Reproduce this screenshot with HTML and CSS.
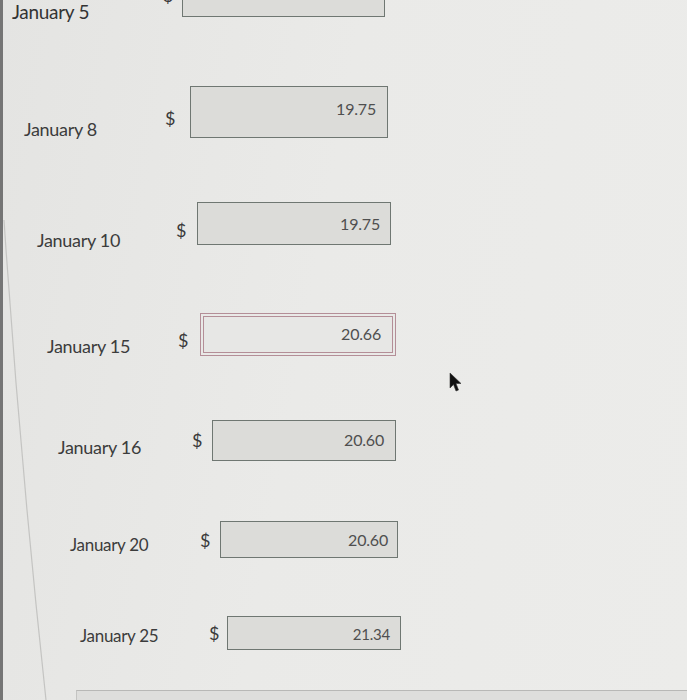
FILE: index.html
```html
<!DOCTYPE html>
<html lang="en">
<head>
<meta charset="utf-8">
<title>Dates</title>
<link rel="stylesheet" href="styles.css">
</head>
<body>
<div class="screen">
  <div class="bezel"></div>
  <main class="list">
    <div class="row row-0">
      <span class="label">January 5</span>
      <span class="dollar">$</span>
      <div class="field"><span class="value"></span></div>
    </div>
    <div class="row row-1">
      <span class="label">January 8</span>
      <span class="dollar">$</span>
      <div class="field"><span class="value">19.75</span></div>
    </div>
    <div class="row row-2">
      <span class="label">January 10</span>
      <span class="dollar">$</span>
      <div class="field"><span class="value">19.75</span></div>
    </div>
    <div class="row row-3">
      <span class="label">January 15</span>
      <span class="dollar">$</span>
      <div class="field field-error"><span class="value">20.66</span></div>
    </div>
    <div class="row row-4">
      <span class="label">January 16</span>
      <span class="dollar">$</span>
      <div class="field"><span class="value">20.60</span></div>
    </div>
    <div class="row row-5">
      <span class="label">January 20</span>
      <span class="dollar">$</span>
      <div class="field"><span class="value">20.60</span></div>
    </div>
    <div class="row row-6">
      <span class="label">January 25</span>
      <span class="dollar">$</span>
      <div class="field"><span class="value">21.34</span></div>
    </div>
    <div class="footer-box"></div>
  </main>
  <svg class="edge-line" width="60" height="700" viewBox="0 0 60 700"><path d="M4 220 Q20 460 46 700" fill="none" stroke="#c4c4c2" stroke-width="1.2"/></svg>
  <svg class="cursor" width="14" height="22" viewBox="0 0 14 22"><path d="M1 1 L1 16 L4.5 12.5 L7 19 L9.5 18 L7 11.5 L12 11.5 Z" fill="#111" stroke="#333" stroke-width="0.6"/></svg>
</div>
</body>
</html>
```

FILE: styles.css
```css
html, body {
  margin: 0;
  padding: 0;
  width: 687px;
  height: 700px;
  overflow: hidden;
  background: #e8e8e6;
}

.screen {
  position: relative;
  width: 687px;
  height: 700px;
  display: flex;
  background: linear-gradient(100deg, #e4e4e2 0%, #eaeae8 45%, #ececea 100%);
  font-family: Lato, "Open Sans", sans-serif;
  color: #3c3c3c;
}

.bezel {
  width: 3px;
  flex: none;
  background: #757575;
}

.list {
  flex: 1;
  display: flex;
  flex-direction: column;
  margin-top: -37px;
}

.row {
  display: flex;
  align-items: flex-start;
  flex: none;
}

.label {
  font-size: 18px;
  line-height: 20px;
  letter-spacing: -0.3px;
  white-space: nowrap;
  flex: none;
}

.dollar {
  font-size: 18px;
  line-height: 20px;
  flex: none;
  color: #3a3a3a;
}

.field {
  flex: none;
  box-sizing: border-box;
  border: 1px solid #6f7772;
  background: #dcdcd9;
  display: flex;
  justify-content: flex-end;
  align-items: flex-start;
}

.field-error {
  border-color: #b48e97;
  background: #e7e7e5;
  box-shadow: inset 0 0 0 2px #e9e9e7, inset 0 0 0 3px #b48e97;
}

.value {
  font-size: 16px;
  line-height: 18px;
  color: #4f4f4f;
  letter-spacing: -0.2px;
}

/* row geometry (photo perspective) */
.row-0 { height: 123px; padding-left: 9px; }
.row-0 .label { width: 151px; margin-top: 39px; font-size: 19px; color: #333; }
.row-0 .dollar { width: 19px; margin-top: 22px; }
.row-0 .field { width: 203px; height: 54px; }

.row-1 { height: 116px; padding-left: 21px; }
.row-1 .label { width: 141px; margin-top: 33px; }
.row-1 .dollar { width: 25px; margin-top: 22px; }
.row-1 .field { width: 198px; height: 52px; padding: 13px 11px 0 0; }

.row-2 { height: 111px; padding-left: 34px; }
.row-2 .label { width: 139px; margin-top: 28px; }
.row-2 .dollar { width: 21px; margin-top: 18px; }
.row-2 .field { width: 194px; height: 43px; padding: 12px 10px 0 0; }

.row-3 { height: 107px; padding-left: 44px; }
.row-3 .label { width: 131px; margin-top: 23px; }
.row-3 .dollar { width: 22px; margin-top: 17px; }
.row-3 .field { width: 196px; height: 43px; padding: 11px 14px 0 0; }

.row-4 { height: 101px; padding-left: 55px; }
.row-4 .label { width: 134px; margin-top: 17px; }
.row-4 .dollar { width: 20px; margin-top: 10px; }
.row-4 .field { width: 184px; height: 41px; padding: 10px 11px 0 0; }

.row-5 { height: 95px; padding-left: 67px; }
.row-5 .label { width: 130px; margin-top: 14px; font-size: 17px; }
.row-5 .dollar { width: 20px; margin-top: 9px; }
.row-5 .field { width: 178px; height: 37px; padding: 9px 9px 0 0; }

.row-6 { height: 74px; padding-left: 77px; }
.row-6 .label { width: 129px; margin-top: 10px; font-size: 17px; }
.row-6 .dollar { width: 18px; margin-top: 7px; }
.row-6 .field { width: 174px; height: 34px; padding: 8px 10px 0 0; }
.row-6 .value { font-size: 15px; }

.footer-box {
  flex: none;
  margin-left: 73px;
  height: 20px;
  box-sizing: border-box;
  border-top: 1px solid #b8b8b6;
  border-left: 1px solid #c4c4c2;
  background: #dededc;
}

.edge-line {
  position: absolute;
  left: 0;
  top: 0;
  pointer-events: none;
}

.cursor {
  position: absolute;
  left: 449px;
  top: 372px;
}
```
